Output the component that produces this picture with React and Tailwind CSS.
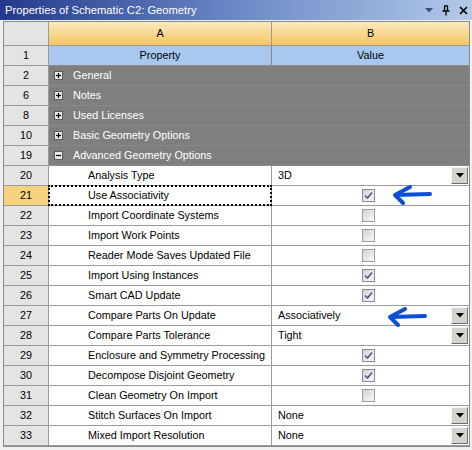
import React from 'react';

const groups = [
  { n: 2, label: 'General', open: false },
  { n: 6, label: 'Notes', open: false },
  { n: 8, label: 'Used Licenses', open: false },
  { n: 10, label: 'Basic Geometry Options', open: false },
  { n: 19, label: 'Advanced Geometry Options', open: true },
];

const props = [
  { n: 20, label: 'Analysis Type', type: 'select', value: '3D' },
  { n: 21, label: 'Use Associativity', type: 'check', value: true, selected: true },
  { n: 22, label: 'Import Coordinate Systems', type: 'check', value: false },
  { n: 23, label: 'Import Work Points', type: 'check', value: false },
  { n: 24, label: 'Reader Mode Saves Updated File', type: 'check', value: false },
  { n: 25, label: 'Import Using Instances', type: 'check', value: true },
  { n: 26, label: 'Smart CAD Update', type: 'check', value: true },
  { n: 27, label: 'Compare Parts On Update', type: 'select', value: 'Associatively' },
  { n: 28, label: 'Compare Parts Tolerance', type: 'select', value: 'Tight' },
  { n: 29, label: 'Enclosure and Symmetry Processing', type: 'check', value: true },
  { n: 30, label: 'Decompose Disjoint Geometry', type: 'check', value: true },
  { n: 31, label: 'Clean Geometry On Import', type: 'check', value: false },
  { n: 32, label: 'Stitch Surfaces On Import', type: 'select', value: 'None' },
  { n: 33, label: 'Mixed Import Resolution', type: 'select', value: 'None' },
];

const NumCell = ({ n, active }) => (
  <div
    className={`h-[20px] flex items-center justify-center border-b border-r border-[#9a9a9a] ${
      active ? 'bg-[#f5d37e]' : 'bg-[#e4e4e4]'
    }`}
  >
    {n}
  </div>
);

const Checkbox = ({ checked }) => (
  <div
    className={`w-[13px] h-[13px] border flex items-center justify-center bg-gradient-to-br from-[#d2d2d2] to-[#fafafa] ${
      checked ? 'border-[#8a8a9c]' : 'border-[#9e9e9e]'
    }`}
  >
    {checked && (
      <svg width="9" height="9" viewBox="0 0 9 9">
        <path d="M1 4.5 L3.5 7 L8 1.5" fill="none" stroke="#4a5a8a" strokeWidth="1.6" />
      </svg>
    )}
  </div>
);

const DropButton = () => (
  <div className="w-[17px] h-[17px] bg-[#d6d3ce] border-t border-l border-t-[#f4f4f4] border-l-[#f4f4f4] border-r border-b border-r-[#6e6e6e] border-b-[#6e6e6e] flex items-center justify-center">
    <svg width="8" height="5" viewBox="0 0 8 5">
      <path d="M0 0 H8 L4 4.5 Z" fill="#000" />
    </svg>
  </div>
);

const TreeBox = ({ open }) => (
  <div className="w-[9px] h-[9px] bg-[#e8e8e8] border border-[#5a5a5a] flex items-center justify-center">
    <svg width="7" height="7" viewBox="0 0 7 7">
      <path d="M1 3.5 H6" stroke="#000" strokeWidth="1.2" />
      {!open && <path d="M3.5 1 V6" stroke="#000" strokeWidth="1.2" />}
    </svg>
  </div>
);

const Arrow = ({ className }) => (
  <svg className={`absolute ${className}`} width="44" height="24" viewBox="0 0 44 24">
    <path d="M40 11 L6 12" stroke="#0b4fd6" strokeWidth="4" strokeLinecap="round" fill="none" />
    <path d="M20 4 L5 12 L13 20" stroke="#0b4fd6" strokeWidth="4" strokeLinecap="round" strokeLinejoin="round" fill="none" />
  </svg>
);

export default function App() {
  return (
    <div className="relative w-[472px] h-[450px] bg-[#f0f0f0] overflow-hidden font-['Liberation_Sans',Arial,sans-serif] text-[10.8px] text-black whitespace-nowrap">
      {/* title bar */}
      <div className="h-[20px] flex items-center pl-[5px] pr-[4px] bg-gradient-to-r from-[#25388c] via-[#6d88c6] to-[#b3cae8] text-white text-[11.2px]">
        <span className="flex-1">Properties of Schematic C2: Geometry</span>
        <div className="flex items-center gap-[9px] text-[#111]">
          <svg width="8" height="5" viewBox="0 0 8 5">
            <path d="M0 0 H8 L4 4.5 Z" fill="#3c5078" />
          </svg>
          <svg width="8" height="11" viewBox="0 0 8 11">
            <path d="M2 1 H6 M2.5 1 V6 M5.5 1 V6 M0.5 6 H7.5 M4 6 V10.5" stroke="#000" strokeWidth="1.3" fill="none" />
          </svg>
          <svg width="9" height="9" viewBox="0 0 9 9">
            <path d="M1 1 L8 8 M8 1 L1 8" stroke="#000" strokeWidth="1.7" />
          </svg>
        </div>
      </div>

      <div className="ml-[3px] mr-[2px] mt-[1px] border border-[#8a8a8a] grid grid-cols-[45px_223px_1fr]">
        {/* column header */}
        <div className="h-[24px] bg-[#e4e4e4] border-b border-r border-[#9a9a9a]" />
        <div className="h-[24px] flex items-center justify-center bg-gradient-to-b from-[#fbe9bd] to-[#f4c65c] border-b border-r border-[#9a9a9a]">A</div>
        <div className="h-[24px] flex items-center justify-center bg-gradient-to-b from-[#fbe9bd] to-[#f4c65c] border-b border-[#9a9a9a]">B</div>

        <NumCell n={1} />
        <div className="h-[20px] flex items-center justify-center bg-[#a9c8ef] border-b border-r border-[#8a8a8a]">Property</div>
        <div className="h-[20px] flex items-center justify-center bg-[#a9c8ef] border-b border-[#8a8a8a]">Value</div>

        {groups.map((g) => (
          <React.Fragment key={g.n}>
            <NumCell n={g.n} />
            <div className="col-span-2 h-[20px] flex items-center pl-[5px] gap-[10px] bg-[#7f7f7f] text-white border-b border-[#8a8a8a]">
              <TreeBox open={g.open} />
              <span>{g.label}</span>
            </div>
          </React.Fragment>
        ))}

        {props.map((p) => (
          <React.Fragment key={p.n}>
            <NumCell n={p.n} active={p.selected} />
            <div className="relative h-[20px] flex items-center pl-[39px] bg-white border-b border-r border-[#9a9a9a]">
              {p.label}
              {p.selected && (
                <div className="absolute -top-[1px] -left-[1px] -right-[1px] -bottom-[1px] border-[2px] border-dotted border-black" />
              )}
            </div>
            <div className="h-[20px] flex items-center bg-white border-b border-[#9a9a9a]">
              {p.type === 'check' ? (
                <div className="flex-1 flex justify-center pr-[4px]">
                  <Checkbox checked={p.value} />
                </div>
              ) : (
                <div className="flex-1 flex items-center pl-[6px] pr-[1px]">
                  <span className="flex-1">{p.value}</span>
                  <DropButton />
                </div>
              )}
            </div>
          </React.Fragment>
        ))}
      </div>

      <Arrow className="left-[390px] top-[183px]" />
      <Arrow className="left-[385px] top-[305px]" />
    </div>
  );
}
